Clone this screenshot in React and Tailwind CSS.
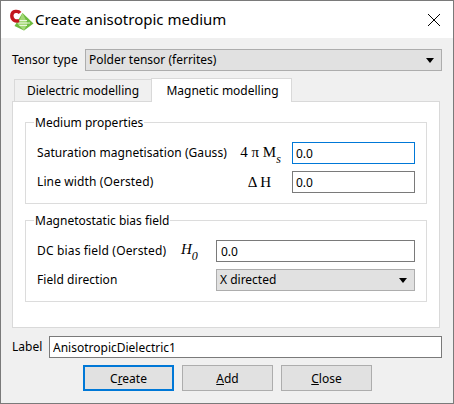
import React from 'react';

const font = { fontFamily: '"Noto Sans", "Open Sans", sans-serif' };

function AppIcon() {
  return (
    <svg width="24" height="24" viewBox="10 7.5 24 24" className="shrink-0">
      <path d="M22.5 12.5 L33.5 23 L24 30 L14.5 25.5 Z" fill="#6dbb3f" />
      <path d="M22.5 12.5 L27.5 23 L24 30 L18 24 Z" fill="#a5d978" />
      <path d="M19.5 20 L27 20 M17.5 22.5 L30 22.5 M19.5 25 L27 25" stroke="#eaf6dc" strokeWidth="1.1" fill="none" />
      <path d="M20 12.5 C18.5 10.2 12 9.8 11.8 15 C11.7 19 15 21.3 19 20.2" stroke="#c2161d" strokeWidth="3.4" fill="none" />
    </svg>
  );
}

function Caret() {
  return (
    <svg width="8" height="5" viewBox="0 0 8 5" className="shrink-0">
      <path d="M0 0 H8 L4 5 Z" fill="#000" />
    </svg>
  );
}

function Combo({ className, children }) {
  return (
    <div className={`flex items-center justify-between h-[22px] bg-[#e1e1e1] border border-[#adadad] pl-[3px] pr-[7px] text-[12px] text-black ${className}`}>
      <span>{children}</span>
      <Caret />
    </div>
  );
}

function Field({ className, value }) {
  return (
    <input
      readOnly
      value={value}
      className={`h-[22px] bg-white border px-[3px] text-[12px] text-black outline-none ${className}`}
    />
  );
}

function Group({ title, children }) {
  return (
    <div className="relative h-[82px] border border-[#dcdcdc] pt-[19px] pl-[11px]">
      <span className="absolute left-[8px] top-[-9px] bg-white px-px text-[12px] leading-[17px]">{title}</span>
      {children}
    </div>
  );
}

function Btn({ focus, children }) {
  return (
    <button
      className={`w-[91px] h-[26px] pt-px bg-[#e1e1e1] text-[12px] text-black ${focus ? 'border-2 border-[#0078d7]' : 'border border-[#adadad]'}`}
    >
      {children}
    </button>
  );
}

export default function App() {
  return (
    <div style={font} className="w-[454px] h-[404px] flex flex-col border border-[#7a7a7a] bg-[#f0f0f0] text-black overflow-hidden">
      <div className="h-[37px] bg-white flex items-center pl-[9px] pr-[12px] shrink-0">
        <AppIcon />
        <span className="ml-[1px] text-[15px]">Create anisotropic medium</span>
        <svg width="14" height="14" viewBox="0 0 14 14" className="ml-auto">
          <path d="M1 1 L13 13 M13 1 L1 13" stroke="#000" strokeWidth="1" fill="none" />
        </svg>
      </div>

      <div className="flex-1 flex flex-col pl-[11px] pr-[11px] pt-[11px]">
        <div className="flex items-center">
          <span className="text-[12px] w-[73px]">Tensor type</span>
          <Combo className="w-[357px]">Polder tensor (ferrites)</Combo>
        </div>

        <div className="flex items-end h-[30px] ml-[2px]">
          <div className="w-[138px] h-[22px] pt-px flex items-center justify-center bg-[#f0f0f0] border border-b-0 border-[#d9d9d9] text-[12px]">
            Dielectric modelling
          </div>
          <div className="w-[141px] h-[24px] -ml-px -mb-px pl-[2px] relative z-10 flex items-center justify-center bg-white border border-b-0 border-[#d9d9d9] text-[12px]">
            Magnetic modelling
          </div>
        </div>

        <div className="w-[428px] h-[227px] bg-white border border-[#d9d9d9] pl-[12px] pr-[12px] pt-[20px] flex flex-col gap-[16px]">
          <Group title="Medium properties">
            <div className="flex items-center h-[22px]">
              <span className="text-[12px] tracking-[0.06px] w-[192px] whitespace-nowrap">Saturation magnetisation (Gauss)</span>
              <span className="w-[63px] text-center font-['Liberation_Serif'] text-[15px] -mt-[2px]">
                4 π M<sub className="italic text-[12px] align-[-3px] leading-none">s</sub>
              </span>
              <Field className="w-[123px] border-[#0078d7]" value="0.0" />
            </div>
            <div className="flex items-center h-[22px] mt-[7px]">
              <span className="text-[12px] tracking-[0.12px] w-[192px]">Line width (Oersted)</span>
              <span className="w-[61px] text-center font-['Liberation_Serif'] text-[15px]">Δ H</span>
              <Field className="w-[123px] ml-[2px] border-[#7a7a7a]" value="0.0" />
            </div>
          </Group>
          <Group title="Magnetostatic bias field">
            <div className="flex items-center h-[22px]">
              <span className="text-[12px] tracking-[0.16px] w-[144px]">DC bias field (Oersted)</span>
              <span className="w-[35px] text-left font-['Liberation_Serif'] italic text-[15px] -mt-[3px]">H<sub className="text-[12px] align-[-3px] leading-none">0</sub></span>
              <Field className="w-[199px] pl-[4px] border-[#7a7a7a]" value="0.0" />
            </div>
            <div className="flex items-center h-[22px] mt-[7px]">
              <span className="text-[12px] tracking-[0.06px] w-[179px]">Field direction</span>
              <Combo className="w-[199px]">X directed</Combo>
            </div>
          </Group>
        </div>

        <div className="flex items-center mt-[8px]">
          <span className="text-[12px] w-[37px]">Label</span>
          <Field className="w-[393px] border-[#7a7a7a]" value="AnisotropicDielectric1" />
        </div>

        <div className="flex gap-[8px] mt-[7px] ml-[71px]">
          <Btn focus>C<span className="underline">r</span>eate</Btn>
          <Btn><span className="underline">A</span>dd</Btn>
          <Btn><span className="underline">C</span>lose</Btn>
        </div>
      </div>
    </div>
  );
}
